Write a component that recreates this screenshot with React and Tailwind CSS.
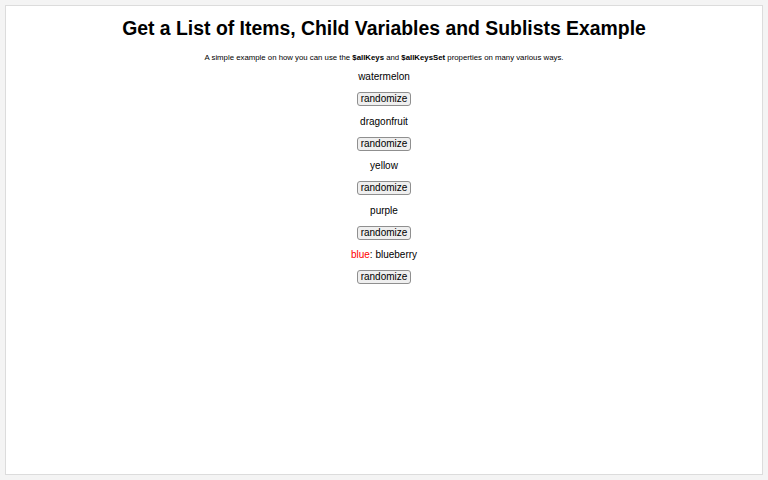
import React, { useState } from "react";

const fruits = ["watermelon", "dragonfruit", "yellow", "purple"];

const App = () => {
  const [items] = useState(fruits);

  return (
    <div className="min-h-[480px] bg-[#f4f4f4] p-[5px] font-['Liberation_Sans',Arial,sans-serif] text-black">
      <div className="h-[470px] bg-white border border-[#dcdcdc] flex flex-col items-center">
        {/* Header */}
        <h1 className="mt-[10px] text-[19.4px] leading-[24px] font-bold">
          Get a List of Items, Child Variables and Sublists Example
        </h1>
        <p className="mt-[13px] text-[7.8px] leading-[10px]">
          A simple example on how you can use the <b>$allKeys</b> and{" "}
          <b>$allKeysSet</b> properties on many various ways.
        </p>

        {/* List */}
        <div className="mt-[4px] flex flex-col items-center">
          {items.map((item, i) => (
            <div key={i} className="flex flex-col items-center h-[44.5px]">
              <span className="mt-[4px] text-[10px] leading-[12px]">{item}</span>
              <button
                type="button"
                className="mt-[9px] h-[14px] px-[3px] text-[10px] leading-[12px] bg-[#efefef] border border-[#8f8f8f] rounded-[3px]"
              >
                randomize
              </button>
            </div>
          ))}
          <div className="flex flex-col items-center h-[44.5px]">
            <span className="mt-[4px] text-[10px] leading-[12px]">
              <span className="text-[#ff0000]">blue</span>: blueberry
            </span>
            <button
              type="button"
              className="mt-[9px] h-[14px] px-[3px] text-[10px] leading-[12px] bg-[#efefef] border border-[#8f8f8f] rounded-[3px]"
            >
              randomize
            </button>
          </div>
        </div>
      </div>
    </div>
  );
};

export default App;
